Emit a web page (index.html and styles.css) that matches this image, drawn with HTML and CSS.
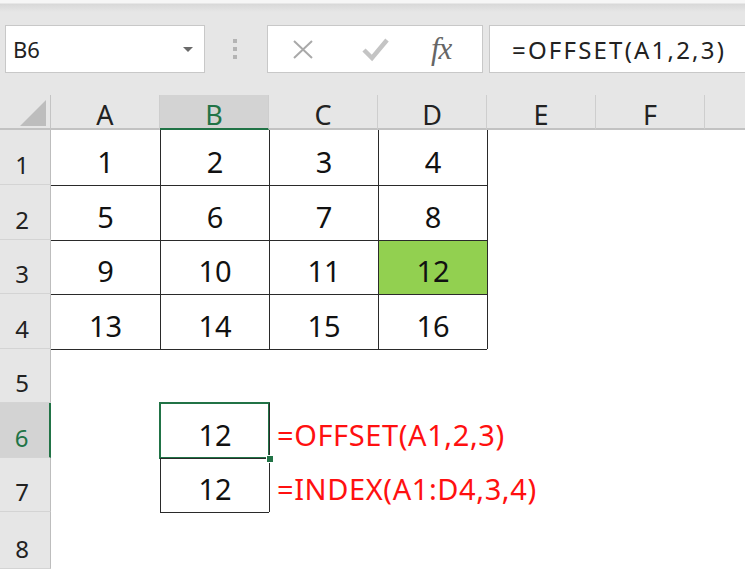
FILE: index.html
```html
<!DOCTYPE html>
<html lang="en">
<head>
    <meta charset="UTF-8">
    <title>OFFSET vs INDEX</title>
    <link rel="stylesheet" href="styles.css">
</head>
<body>

<div class="toolbar">
    <div class="namebox">
        <span>B6</span>
        <span class="caret"></span>
    </div>
    <div class="grip"><i></i><i></i><i></i></div>
    <div class="fxbox">
        <svg class="ico-x" width="22" height="19" viewBox="0 0 22 19">
            <path d="M2 1 L20 18 M20 1 L2 18" stroke="#a9a9a9" stroke-width="2" fill="none"/>
        </svg>
        <svg class="ico-ok" width="27" height="25" viewBox="0 0 27 25">
            <path d="M2 13 L10 21 L25 3" stroke="#c4c4c4" stroke-width="4.5" fill="none"/>
        </svg>
        <span class="ico-fx">fx</span>
    </div>
    <div class="formula">=OFFSET(A1,2,3)</div>
</div>

<div class="sheet">
    <div class="hdr">
        <div class="corner">
            <svg width="50" height="33" viewBox="0 0 50 33">
                <polygon points="20,31 46,31 46,5" fill="#bdbdbd"/>
            </svg>
        </div>
        <div class="ch">A</div>
        <div class="ch sel">B</div>
        <div class="ch">C</div>
        <div class="ch">D</div>
        <div class="ch">E</div>
        <div class="ch">F</div>
        <div class="ch"></div>
    </div>

    <div class="row h55">
        <div class="rh">1</div>
        <div class="c">1</div>
        <div class="c bl">2</div>
        <div class="c bl">3</div>
        <div class="c bl">4</div>
        <div class="c bl"></div>
        <div class="c"></div>
        <div class="c"></div>
    </div>
    <div class="row h55">
        <div class="rh">2</div>
        <div class="c bt">5</div>
        <div class="c bl bt">6</div>
        <div class="c bl bt">7</div>
        <div class="c bl bt">8</div>
        <div class="c bl"></div>
        <div class="c"></div>
        <div class="c"></div>
    </div>
    <div class="row h54">
        <div class="rh">3</div>
        <div class="c bt">9</div>
        <div class="c bl bt">10</div>
        <div class="c bl bt">11</div>
        <div class="c bl bt hit">12</div>
        <div class="c bl"></div>
        <div class="c"></div>
        <div class="c"></div>
    </div>
    <div class="row h55">
        <div class="rh">4</div>
        <div class="c bt">13</div>
        <div class="c bl bt">14</div>
        <div class="c bl bt">15</div>
        <div class="c bl bt">16</div>
        <div class="c bl"></div>
        <div class="c"></div>
        <div class="c"></div>
    </div>
    <div class="row h54">
        <div class="rh">5</div>
        <div class="c bt"></div>
        <div class="c bt"></div>
        <div class="c bt"></div>
        <div class="c bt"></div>
        <div class="c"></div>
        <div class="c"></div>
        <div class="c"></div>
    </div>
    <div class="row h55">
        <div class="rh on">6</div>
        <div class="c"></div>
        <div class="c bl bt active">12</div>
        <div class="c bl note">=OFFSET(A1,2,3)</div>
        <div class="c"></div>
        <div class="c"></div>
        <div class="c"></div>
        <div class="c"></div>
    </div>
    <div class="row h54">
        <div class="rh">7</div>
        <div class="c"></div>
        <div class="c bl bt">12</div>
        <div class="c bl note">=INDEX(A1:D4,3,4)</div>
        <div class="c"></div>
        <div class="c"></div>
        <div class="c"></div>
        <div class="c"></div>
    </div>
    <div class="row h57">
        <div class="rh">8</div>
        <div class="c"></div>
        <div class="c bt"></div>
        <div class="c"></div>
        <div class="c"></div>
        <div class="c"></div>
        <div class="c"></div>
        <div class="c"></div>
    </div>
</div>

</body>
</html>
```

FILE: styles.css
```css
body {
    margin: 0;
    width: 745px;
    height: 569px;
    overflow: hidden;
    background: #fff;
    font-family: "Noto Sans", "Open Sans", sans-serif;
    color: #111;
}

/* formula bar */
.toolbar {
    height: 95px;
    box-sizing: border-box;
    padding: 25px 0 0 5px;
    display: flex;
    align-items: flex-start;
    overflow: hidden;
    background: linear-gradient(#f6f6f6 0, #f6f6f6 3px, #d8d8d8 4px, #e6e6e6 12px);
}
.namebox {
    width: 200px;
    height: 48px;
    box-sizing: border-box;
    flex: none;
    display: flex;
    align-items: center;
    padding-left: 7px;
    background: #fff;
    border: 1px solid #c8c8c8;
    font-size: 22px;
    color: #222;
}
.caret {
    margin-left: auto;
    margin-right: 11px;
    border-left: 5px solid transparent;
    border-right: 5px solid transparent;
    border-top: 5px solid #6a6a6a;
}
.grip {
    margin: 14px 0 0 28px;
    width: 4px;
    display: flex;
    flex-direction: column;
    gap: 4px;
}
.grip i {
    width: 4px;
    height: 4px;
    background: #b4b4b4;
}
.fxbox {
    margin-left: 30px;
    width: 216px;
    height: 48px;
    box-sizing: border-box;
    flex: none;
    display: flex;
    align-items: center;
    background: #fff;
    border: 1px solid #c8c8c8;
}
.ico-x { margin-left: 24px; }
.ico-ok { margin-left: 48px; }
.ico-fx {
    margin-left: 42px;
    font-family: "Liberation Serif", "DejaVu Serif", serif;
    font-style: italic;
    font-size: 31px;
    color: #666;
    letter-spacing: -1px;
}
.formula {
    margin-left: 6px;
    flex: 1;
    height: 48px;
    box-sizing: border-box;
    margin-right: -10px;
    display: flex;
    align-items: center;
    padding-left: 22px;
    background: #fff;
    border: 1px solid #c8c8c8;
    font-size: 24px;
    letter-spacing: 2.2px;
    color: #222;
}

/* grid */
.sheet {
    height: 474px;
    overflow: hidden;
}
.hdr, .row {
    display: flex;
}
.hdr {
    height: 35px;
    background: #e6e6e6;
}
.corner {
    width: 51px;
    flex: none;
    box-sizing: border-box;
    border-right: 1px solid #c4c4c4;
    border-bottom: 2px solid #c2c2c2;
}
.corner svg { display: block; }
.ch {
    width: 109px;
    flex: none;
    box-sizing: border-box;
    border-right: 1px solid #cecece;
    border-bottom: 2px solid #c2c2c2;
    display: flex;
    align-items: flex-end;
    justify-content: center;
    font-size: 27px;
    line-height: 27px;
    color: #222;
}
.ch.sel {
    background: #d3d3d3;
    color: #217346;
    border-bottom-color: #217346;
}

.h54 { height: 54px; }
.h55 { height: 55px; }
.h57 { height: 57px; }

.rh {
    width: 51px;
    flex: none;
    box-sizing: border-box;
    background: #e6e6e6;
    border-right: 1px solid #bdbdbd;
    border-bottom: 1px solid #d4d4d4;
    display: flex;
    align-items: flex-end;
    justify-content: center;
    padding: 0 6px 7px 0;
    font-size: 24px;
    line-height: 24px;
    color: #222;
}
.rh.on {
    background: #d3d3d3;
    color: #217346;
    border-right: 2px solid #217346;
}

.c {
    width: 109px;
    flex: none;
    box-sizing: border-box;
    display: flex;
    align-items: flex-end;
    justify-content: center;
    padding-bottom: 9px;
    font-size: 29px;
    line-height: 29px;
    white-space: nowrap;
    position: relative;
}
.bl { border-left: 1px solid #2a2a2a; }
.bt { border-top: 1px solid #2a2a2a; }
.hit { background: #92d050; }

.note {
    justify-content: flex-start;
    padding-left: 7px;
    color: #ff1010;
    letter-spacing: 0.6px;
}

.active::after {
    content: "";
    position: absolute;
    top: -2px;
    left: -2px;
    right: -1px;
    bottom: -1px;
    border: 2px solid #217346;
}
.active::before {
    content: "";
    position: absolute;
    right: -5px;
    bottom: -5px;
    width: 6px;
    height: 6px;
    background: #217346;
    border: 1px solid #fff;
    z-index: 1;
}
```
